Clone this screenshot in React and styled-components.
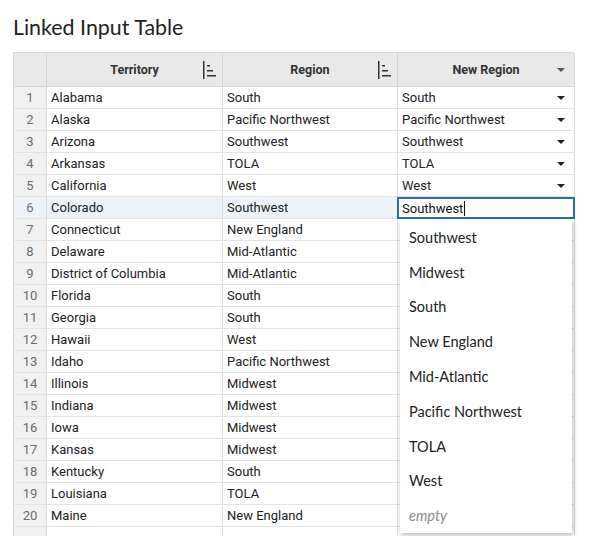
import React from 'react'
import styled, {createGlobalStyle} from 'styled-components'

const GlobalStyle = createGlobalStyle`
    body {
        margin: 0;
        background: #ffffff;
        font-family: Roboto, "Liberation Sans", sans-serif;
    }
`

const rows = [
    ['Alabama', 'South', 'South'],
    ['Alaska', 'Pacific Northwest', 'Pacific Northwest'],
    ['Arizona', 'Southwest', 'Southwest'],
    ['Arkansas', 'TOLA', 'TOLA'],
    ['California', 'West', 'West'],
    ['Colorado', 'Southwest', null],
    ['Connecticut', 'New England', ''],
    ['Delaware', 'Mid-Atlantic', ''],
    ['District of Columbia', 'Mid-Atlantic', ''],
    ['Florida', 'South', ''],
    ['Georgia', 'South', ''],
    ['Hawaii', 'West', ''],
    ['Idaho', 'Pacific Northwest', ''],
    ['Illinois', 'Midwest', ''],
    ['Indiana', 'Midwest', ''],
    ['Iowa', 'Midwest', ''],
    ['Kansas', 'Midwest', ''],
    ['Kentucky', 'South', ''],
    ['Louisiana', 'TOLA', ''],
    ['Maine', 'New England', ''],
    ['', '', ''],
]

const options = ['Southwest', 'Midwest', 'South', 'New England', 'Mid-Atlantic', 'Pacific Northwest', 'TOLA', 'West']

const Page = styled.div`
    height: 536px;
    overflow: hidden;
    padding: 15px 0 0 13px;
    box-sizing: border-box;
`

const Title = styled.h1`
    margin: 0 0 13px 0;
    font-family: "Source Sans Pro", Lato, "Noto Sans", sans-serif;
    font-weight: 400;
    font-size: 21.4px;
    line-height: 24px;
    color: #222;
`

const Grid = styled.div`
    display: grid;
    grid-template-columns: 33px 176px 175px 177px;
    width: 561px;
    border-top: 1px solid #d9d9d9;
    border-left: 1px solid #d9d9d9;
    box-sizing: border-box;
`

const HeadCell = styled.div`
    height: 33px;
    background: #e9e9e9;
    border-right: 1px solid #d6d6d6;
    border-bottom: 1px solid #d6d6d6;
    display: flex;
    align-items: center;
    justify-content: center;
    position: relative;
    font-size: 12.5px;
    font-weight: 700;
    color: #333;
`

const HeadTool = styled.span`
    position: absolute;
    right: ${({$right}) => $right}px;
    top: 0;
    bottom: 0;
    display: flex;
    align-items: center;
`

const NumCell = styled.div`
    height: 21px;
    background: ${({$active}) => ($active ? '#edf2f8' : '#f1f1f1')};
    border-right: 1px solid #dcdcdc;
    border-bottom: 1px solid #e3e3e3;
    display: flex;
    align-items: center;
    justify-content: center;
    font-size: 13px;
    color: #6b6b6b;
`

const Cell = styled.div`
    height: 21px;
    background: ${({$active}) => ($active ? '#edf2f8' : '#ffffff')};
    border-right: 1px solid #dcdcdc;
    border-bottom: 1px solid #e3e3e3;
    display: flex;
    align-items: center;
    padding-left: 4px;
    position: relative;
    font-size: 13px;
    color: #222;
    white-space: nowrap;
`

const Caret = styled.span`
    position: absolute;
    right: ${({$right}) => $right ?? 9}px;
    top: 50%;
    margin-top: -2px;
    width: 0;
    height: 0;
    border-left: 4px solid transparent;
    border-right: 4px solid transparent;
    border-top: 4px solid ${({$light}) => ($light ? '#555' : '#222')};
`

const EditBox = styled.div`
    position: absolute;
    left: -1px;
    right: -1px;
    top: 0;
    bottom: -1px;
    border: 2px solid #2d6f93;
    background: #fff;
    display: flex;
    align-items: center;
    padding-left: 3px;
    font-size: 13px;
    color: #111;
    z-index: 2;
`

const Cursor = styled.span`
    display: inline-block;
    width: 1px;
    height: 15px;
    background: #111;
    margin-left: 1px;
`

const Menu = styled.ul`
    position: absolute;
    left: 2px;
    top: 23px;
    width: 172px;
    margin: 0;
    padding: 0;
    list-style: none;
    background: #fff;
    box-shadow: 1px 2px 5px rgba(0, 0, 0, 0.28);
    z-index: 3;
`

const MenuItem = styled.li`
    height: 34.8px;
    display: flex;
    align-items: center;
    padding-left: 9px;
    font-family: "Source Sans Pro", Lato, "Noto Sans", sans-serif;
    font-size: 14.5px;
    color: ${({$empty}) => ($empty ? '#8a8a8a' : '#222')};
    font-style: ${({$empty}) => ($empty ? 'italic' : 'normal')};
`

const SortIcon = () => (
    <svg width="14" height="18" viewBox="0 0 14 18">
        <rect x="0" y="0" width="1.5" height="18" fill="#333" />
        <rect x="4" y="4" width="3" height="1.5" fill="#333" />
        <rect x="4" y="9" width="6" height="1.5" fill="#333" />
        <rect x="4" y="14" width="9" height="1.5" fill="#333" />
    </svg>
)

const App = () => {
    return (
        <Page>
            <GlobalStyle />
            <Title>Linked Input Table</Title>
            <Grid>
                <HeadCell />
                <HeadCell>
                    Territory
                    <HeadTool $right={5}><SortIcon /></HeadTool>
                </HeadCell>
                <HeadCell>
                    Region
                    <HeadTool $right={5}><SortIcon /></HeadTool>
                </HeadCell>
                <HeadCell>
                    New Region
                    <Caret $right={9} $light />
                </HeadCell>
                {rows.map(([territory, region, next], i) => {
                    const active = next === null
                    return (
                        <React.Fragment key={i}>
                            <NumCell $active={active}>{territory ? i + 1 : ''}</NumCell>
                            <Cell $active={active}>{territory}</Cell>
                            <Cell $active={active}>{region}</Cell>
                            <Cell>
                                {active ? (
                                    <>
                                        <EditBox>Southwest<Cursor /></EditBox>
                                        <Menu>
                                            {options.map((o) => (
                                                <MenuItem key={o}>{o}</MenuItem>
                                            ))}
                                            <MenuItem $empty>empty</MenuItem>
                                        </Menu>
                                    </>
                                ) : (
                                    <>
                                        {next}
                                        {next && <Caret />}
                                    </>
                                )}
                            </Cell>
                        </React.Fragment>
                    )
                })}
            </Grid>
        </Page>
    )
}

export default App
